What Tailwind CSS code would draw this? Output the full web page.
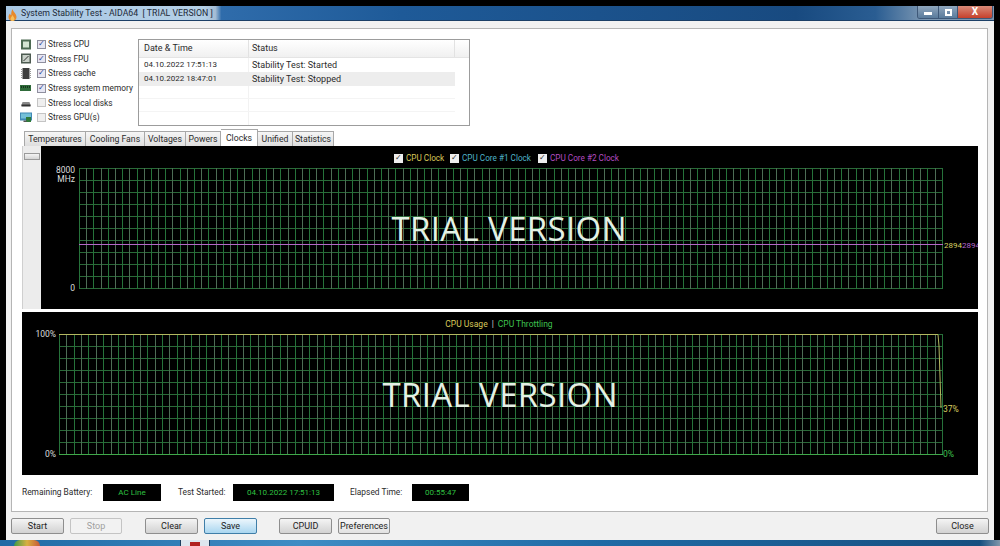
<!DOCTYPE html>
<html><head><meta charset="utf-8"><script src="https://cdn.jsdelivr.net/npm/@tailwindcss/browser@4"></script></head>
<body class="m-0 bg-black">
<div class="w-[1000px] h-[546px] overflow-hidden bg-black flex flex-col font-['Roboto',sans-serif] text-[9px] text-[#2b2b2b] leading-none">
  <div class="h-[6px] shrink-0"></div>
  <div class="ml-[6px] w-[988px] h-[534px] shrink-0 flex flex-col bg-[#f1f1f1]">
    <!-- title bar -->
    <div class="h-[15px] mb-[1px] shrink-0 flex items-start bg-[linear-gradient(90deg,#a9c8e4_0%,#b4cfe6_20%,#a4bcd4_21.200%,#2f6cab_21.800%,#1e5a98_40%,#184a80_80%,#2a5d92_88%,#7d98b3_93%)] border-b border-[#1b3f66]">
      <svg class="ml-[2px] mt-[3px] shrink-0" width="9" height="12" viewBox="0 0 9 12"><path d="M4.5 0C5 3 8.5 4.500 8.500 8 8.500 10.500 6.700 12 4.500 12S.5 10.500.5 8C.5 6.500 1.200 5.500 2 4.500 2.300 5.500 2.700 6 3.300 6.200 3 4 3.500 2 4.500 0Z" fill="#e8892a"/><path d="M4.500 6C5 7.500 6.500 8.500 6.500 10 6.500 11.200 5.500 12 4.500 12S2.500 11.200 2.500 10C2.500 8.500 4 7.500 4.500 6Z" fill="#f6c05a"/></svg>
      <span class="ml-[4px] mt-[3px] text-[8.75px] text-[#1e2a38] whitespace-pre">System Stability Test - AIDA64  [ TRIAL VERSION ]</span>
      <div class="ml-auto mr-[1px] flex h-[13px] rounded-b-[3px] overflow-hidden border border-t-0 border-[#3e5878]">
        <div class="w-[20px] bg-[linear-gradient(180deg,#8fa6bd,#5a7b9c)] flex items-center justify-center"><div class="w-[8px] h-[3px] mt-[3px] bg-white"></div></div>
        <div class="w-[20px] bg-[linear-gradient(180deg,#8fa6bd,#5a7b9c)] border-x border-[#3e5878] flex items-center justify-center"><div class="w-[7px] h-[7px] border-2 border-white"></div></div>
        <div class="w-[34px] bg-[linear-gradient(180deg,#d98a78,#c5402c)] flex items-center justify-center text-white text-[10px] font-bold">X</div>
      </div>
    </div>
    <div class="h-[6px] shrink-0"></div>
    <!-- panel -->
    <div class="ml-[5px] w-[977px] h-[484px] shrink-0 bg-white border border-[#b5b5b5] flex flex-col">
      <!-- top -->
      <div class="h-[100px] shrink-0 flex">
        <div class="w-[126px] shrink-0 pt-[8px] pl-[8px] flex flex-col text-[8.3px]">
          <div class="h-[14.6px] flex items-center"><svg class="w-[12px] shrink-0" width="12" height="11" viewBox="0 0 12 11"><rect x="1" y="0.500" width="10" height="10" fill="#4d6a52"/><rect x="3" y="2.500" width="6" height="6" fill="#d4e4d2"/></svg><span class="ml-[5px] w-[9px] h-[9px] shrink-0 border border-[#8f8f9e] bg-[#e6e6f2] text-[#2c4296] text-[8px] flex items-center justify-center">✓</span><span class="ml-[2px] whitespace-nowrap">Stress CPU</span></div>
          <div class="h-[14.6px] flex items-center"><svg class="w-[12px] shrink-0" width="12" height="11" viewBox="0 0 12 11"><rect x="1" y="0.500" width="10" height="10" fill="#4c5a50"/><rect x="2.500" y="2" width="7" height="7" fill="#c8d0c8"/><path d="M3.500 8 8.500 3" stroke="#333" stroke-width="1"/></svg><span class="ml-[5px] w-[9px] h-[9px] shrink-0 border border-[#8f8f9e] bg-[#e6e6f2] text-[#2c4296] text-[8px] flex items-center justify-center">✓</span><span class="ml-[2px] whitespace-nowrap">Stress FPU</span></div>
          <div class="h-[14.6px] flex items-center"><svg class="w-[12px] shrink-0" width="12" height="11" viewBox="0 0 12 11"><rect x="2.500" y="0" width="7" height="11" fill="#3d3d3d"/><path d="M1.500 1v9M10.500 1v9" stroke="#999" stroke-width="1" stroke-dasharray="1 1"/></svg><span class="ml-[5px] w-[9px] h-[9px] shrink-0 border border-[#8f8f9e] bg-[#e6e6f2] text-[#2c4296] text-[8px] flex items-center justify-center">✓</span><span class="ml-[2px] whitespace-nowrap">Stress cache</span></div>
          <div class="h-[14.6px] flex items-center"><svg class="w-[12px] shrink-0" width="12" height="11" viewBox="0 0 12 11"><rect x="0" y="2" width="11" height="6" fill="#2f6b3a"/><path d="M1 4h9" stroke="#16361c" stroke-width="2" stroke-dasharray="1 1"/></svg><span class="ml-[5px] w-[9px] h-[9px] shrink-0 border border-[#8f8f9e] bg-[#e6e6f2] text-[#2c4296] text-[8px] flex items-center justify-center">✓</span><span class="ml-[2px] whitespace-nowrap">Stress system memory</span></div>
          <div class="h-[14.6px] flex items-center"><svg class="w-[12px] shrink-0" width="12" height="11" viewBox="0 0 12 11"><path d="M2.500 5h7l1 3v1h-9V8Z" fill="#8a8a8a"/><rect x="1.500" y="7.500" width="9" height="2" fill="#333"/></svg><span class="ml-[5px] w-[9px] h-[9px] shrink-0 border border-[#c4c4c4] bg-[#efefef]"></span><span class="ml-[2px] whitespace-nowrap">Stress local disks</span></div>
          <div class="h-[14.6px] flex items-center"><svg class="w-[12px] shrink-0" width="12" height="11" viewBox="0 0 12 11"><rect x="0" y="0.500" width="12" height="8" fill="#3f88b4"/><rect x="1" y="1.500" width="10" height="5" fill="#74c0d8"/><rect x="6" y="5" width="5" height="5" fill="#2f7a3a"/><rect x="3.500" y="8.500" width="3" height="1.500" fill="#555"/></svg><span class="ml-[5px] w-[9px] h-[9px] shrink-0 border border-[#c4c4c4] bg-[#efefef]"></span><span class="ml-[2px] whitespace-nowrap">Stress GPU(s)</span></div>
        </div>
        <!-- log -->
        <div class="mt-[10px] w-[332px] h-[87px] shrink-0 border border-[#9c9c9c] flex flex-col">
          <div class="h-[18px] shrink-0 flex items-center bg-[linear-gradient(180deg,#ffffff,#f0f0f0)] border-b border-[#e4e4e4]">
            <div class="w-[110px] pl-[5px] border-r border-[#e2e2e2] h-full flex items-center">Date &amp; Time</div>
            <div class="w-[206px] pl-[3px] border-r border-[#e2e2e2] h-full flex items-center">Status</div>
          </div>
          <div class="h-[14px] flex items-center w-[316px]"><div class="w-[110px] pl-[5px] border-r border-[#f2f2f2] h-full flex items-center text-[8px]">04.10.2022 17:51:13</div><div class="pl-[3px]">Stability Test: Started</div></div>
          <div class="h-[14px] flex items-center w-[316px] bg-[#ededed]"><div class="w-[110px] pl-[5px] h-full flex items-center text-[8px]">04.10.2022 18:47:01</div><div class="pl-[3px]">Stability Test: Stopped</div></div>
          <div class="h-[13px] w-[316px] border-b border-[#f4f4f4]"><div class="w-[110px] h-full border-r border-[#f2f2f2]"></div></div>
          <div class="h-[13px] w-[316px] border-b border-[#f4f4f4]"><div class="w-[110px] h-full border-r border-[#f2f2f2]"></div></div>
          <div class="h-[13px] w-[316px]"><div class="w-[110px] h-full border-r border-[#f2f2f2]"></div></div>
        </div>
      </div>
      <!-- tabs -->
      <div class="h-[17px] shrink-0 pl-[12px] flex items-end text-[8.7px]">
        <div class="w-[62px] h-[15px] pt-[1px] bg-[linear-gradient(180deg,#f6f6f6,#dedede)] border border-b-0 border-[#a8a8a8] flex items-center justify-center whitespace-nowrap">Temperatures</div>
        <div class="w-[59px] h-[15px] pt-[1px] bg-[linear-gradient(180deg,#f6f6f6,#dedede)] border border-l-0 border-b-0 border-[#a8a8a8] flex items-center justify-center whitespace-nowrap">Cooling Fans</div>
        <div class="w-[41px] h-[15px] pt-[1px] bg-[linear-gradient(180deg,#f6f6f6,#dedede)] border border-l-0 border-b-0 border-[#a8a8a8] flex items-center justify-center whitespace-nowrap">Voltages</div>
        <div class="w-[35px] h-[15px] pt-[1px] bg-[linear-gradient(180deg,#f6f6f6,#dedede)] border border-l-0 border-b-0 border-[#a8a8a8] flex items-center justify-center whitespace-nowrap">Powers</div>
        <div class="w-[37px] h-[17px] bg-white border border-l-0 border-b-0 border-[#a8a8a8] flex items-center justify-center whitespace-nowrap">Clocks</div>
        <div class="w-[35px] h-[15px] pt-[1px] bg-[linear-gradient(180deg,#f6f6f6,#dedede)] border border-l-0 border-b-0 border-[#a8a8a8] flex items-center justify-center whitespace-nowrap">Unified</div>
        <div class="w-[41px] h-[15px] pt-[1px] bg-[linear-gradient(180deg,#f6f6f6,#dedede)] border border-l-0 border-b-0 border-[#a8a8a8] flex items-center justify-center whitespace-nowrap">Statistics</div>
      </div>
      <!-- chart 1 row -->
      <div class="ml-[10px] w-[956px] h-[163px] shrink-0 flex">
        <div class="w-[19px] shrink-0 bg-[#ececec] border-l border-[#cfcfcf] pt-[7px] pl-[1px]">
          <div class="w-[16px] h-[7px] bg-[linear-gradient(180deg,#f4f4f4,#d4d4d4)] border border-[#9a9a9a]"></div>
        </div>
        <div class="relative flex-1 bg-black">
          <div class="h-[24px] pl-[353px] flex items-center text-[8.2px]">
            <span class="w-[56px] flex items-center gap-[3px] text-[#d8c85a] whitespace-nowrap"><span class="w-[9px] h-[9px] bg-[#eeeeee] text-[#333] text-[8px] flex items-center justify-center">✓</span>CPU Clock</span>
            <span class="w-[88px] flex items-center gap-[3px] text-[#4fb4c8] whitespace-nowrap"><span class="w-[9px] h-[9px] bg-[#eeeeee] text-[#333] text-[8px] flex items-center justify-center">✓</span>CPU Core #1 Clock</span>
            <span class="flex items-center gap-[3px] text-[#b44cc0] whitespace-nowrap"><span class="w-[9px] h-[9px] bg-[#eeeeee] text-[#333] text-[8px] flex items-center justify-center">✓</span>CPU Core #2 Clock</span>
          </div>
          <div class="absolute left-[38px] top-[22px] w-[864px] h-[121px] bg-[repeating-linear-gradient(90deg,#26723a_0_1px,transparent_1px_7.19px,#4d6d55_7.19px_8.19px,transparent_8.19px_14.38px),repeating-linear-gradient(180deg,#2a6a38_0_1px,transparent_1px_12px)]"></div>
          <svg class="absolute inset-0 overflow-hidden" width="937" height="163" viewBox="0 0 937 163">
            <rect x="38" y="98" width="864" height="1" fill="#b468c8"/>
            <text x="34" y="27" text-anchor="end" fill="#dddddd" font-size="8.5">8000</text>
            <text x="34" y="36" text-anchor="end" fill="#dddddd" font-size="8.5">MHz</text>
            <text x="34" y="145" text-anchor="end" fill="#dddddd" font-size="8.5">0</text>
            <text x="468" y="95" text-anchor="middle" fill="#e4f0e4" font-family="Open Sans" font-size="33" textLength="235">TRIAL VERSION</text>
            <text x="903" y="102" fill="#d8d060" font-size="8">2894</text>
            <text x="921" y="102" fill="#b868d0" font-size="8">2894</text>
          </svg>
        </div>
      </div>
      <div class="h-[3px] shrink-0"></div>
      <!-- chart 2 -->
      <div class="relative ml-[10px] w-[956px] h-[163px] shrink-0 bg-black">
        <div class="h-[24px] flex items-center justify-center text-[8.5px] gap-[4px] pr-[2px]">
          <span class="text-[#d8c85a]">CPU Usage</span><span class="text-[#dddddd]">|</span><span class="text-[#3fc04f]">CPU Throttling</span>
        </div>
        <div class="absolute left-[37px] top-[22px] w-[884px] h-[121px] bg-[repeating-linear-gradient(90deg,#26723a_0_1px,transparent_1px_7.36px,#4d6d55_7.36px_8.36px,transparent_8.36px_14.72px),repeating-linear-gradient(180deg,#2a6a38_0_1px,transparent_1px_12px)]"></div>
        <svg class="absolute inset-0" width="956" height="163" viewBox="0 0 956 163">
          <rect x="37" y="142" width="884" height="1" fill="#3fa84a"/>
          <path d="M37 22.500H916L917 34 919 96" fill="none" stroke="#b4b860" stroke-width="1"/>
          <text x="34" y="25" text-anchor="end" fill="#dddddd" font-size="8.5">100%</text>
          <text x="34" y="145" text-anchor="end" fill="#dddddd" font-size="8.5">0%</text>
          <text x="478" y="95" text-anchor="middle" fill="#e4f0e4" font-family="Open Sans" font-size="33" textLength="235">TRIAL VERSION</text>
          <text x="921" y="100" fill="#d8d060" font-size="8.5">37%</text>
          <text x="921" y="145" fill="#3fc04f" font-size="8.5">0%</text>
        </svg>
      </div>
      <!-- info row -->
      <div class="h-[36px] shrink-0 flex items-center pl-[10px] pb-[1px] text-[8.4px]">
        <span class="w-[81px] whitespace-nowrap">Remaining Battery:</span>
        <div class="w-[58px] h-[17px] bg-black text-[#2fc040] flex items-center justify-center text-[8px]">AC Line</div>
        <span class="ml-[17px] w-[55px] whitespace-nowrap">Test Started:</span>
        <div class="w-[101px] h-[17px] bg-black text-[#2fc040] flex items-center justify-center text-[8px]">04.10.2022 17:51:13</div>
        <span class="ml-[16px] w-[62px] whitespace-nowrap">Elapsed Time:</span>
        <div class="w-[57px] h-[17px] bg-black text-[#2fc040] flex items-center justify-center text-[8px]">00:55:47</div>
      </div>
    </div>
    <!-- buttons -->
    <div class="h-[28px] shrink-0 flex items-start pt-[6px] pl-[5px] pr-[5px]">
      <div class="w-[53px] h-[16px] rounded-[2px] border border-[#8e8e8e] bg-[linear-gradient(180deg,#f4f4f4,#d2d2d2)] flex items-center justify-center text-[#222]">Start</div>
      <div class="ml-[6px] w-[52px] h-[16px] rounded-[2px] border border-[#c4c4c4] bg-[#f2f2f2] flex items-center justify-center text-[#a0a0a0]">Stop</div>
      <div class="ml-[23px] w-[53px] h-[16px] rounded-[2px] border border-[#8e8e8e] bg-[linear-gradient(180deg,#f4f4f4,#d2d2d2)] flex items-center justify-center text-[#222]">Clear</div>
      <div class="ml-[6px] w-[53px] h-[16px] rounded-[2px] border border-[#3f7ea8] bg-[linear-gradient(180deg,#ecf6fc,#a9d6f0)] flex items-center justify-center text-[#222]">Save</div>
      <div class="ml-[22px] w-[53px] h-[16px] rounded-[2px] border border-[#8e8e8e] bg-[linear-gradient(180deg,#f4f4f4,#d2d2d2)] flex items-center justify-center text-[#222]">CPUID</div>
      <div class="ml-[6px] w-[52px] h-[16px] rounded-[2px] border border-[#8e8e8e] bg-[linear-gradient(180deg,#f8f8f8,#e2e2e2)] flex items-center justify-center text-[#222]">Preferences</div>
      <div class="ml-auto w-[53px] h-[16px] rounded-[2px] border border-[#8e8e8e] bg-[linear-gradient(180deg,#f4f4f4,#d2d2d2)] flex items-center justify-center text-[#222]">Close</div>
    </div>
  </div>
  <!-- taskbar -->
  <div class="h-[6px] shrink-0 flex items-start bg-[linear-gradient(90deg,#1f6aa5,#3f8cc4_30%,#1f6aa5_60%,#164f80_98%,#7f96aa)]">
    <div class="ml-[14px] w-[26px] h-[6px] rounded-t-full bg-[linear-gradient(90deg,#3f9a48,#d8b040,#c85838)]"></div>
    <div class="ml-[140px] w-[30px] h-[6px] bg-[#dde6ee] border-x border-[#1d3f5f] flex justify-center pt-[2px]"><div class="w-[10px] h-[4px] bg-[#b02020]"></div></div>
  </div>
</div>
</body></html>
